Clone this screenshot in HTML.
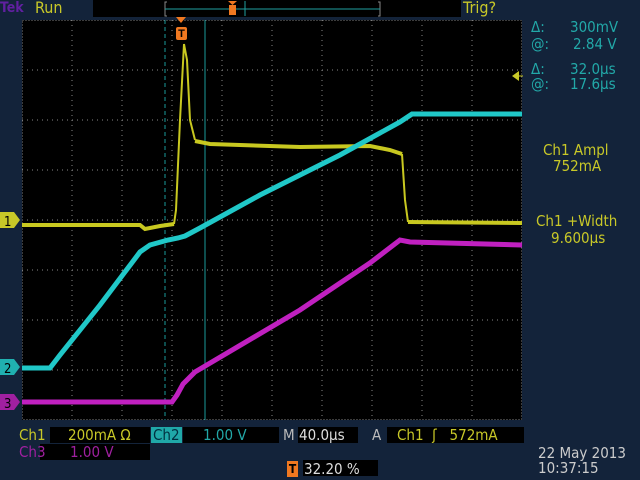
<!DOCTYPE html>
<html><head><style>
body{margin:0;width:640px;height:480px;background:#13233a;overflow:hidden;position:relative;font-family:"DejaVu Sans Condensed","Liberation Sans",sans-serif}
.t{position:absolute;font-size:14px;white-space:nowrap;line-height:16px}
.y{color:#c8c828}.c{color:#22a8a8}.m{color:#a020a0}
.box{position:absolute;background:#000;height:16px}
</style></head><body>
<svg width="640" height="480" style="position:absolute;left:0;top:0">
<rect x="22" y="20" width="500" height="400" fill="#000"/>
<g stroke="#888" stroke-width="1" stroke-dasharray="1,4">
<line x1="72" y1="20" x2="72" y2="420"/><line x1="122" y1="20" x2="122" y2="420"/><line x1="172" y1="20" x2="172" y2="420"/><line x1="222" y1="20" x2="222" y2="420"/><line x1="272" y1="20" x2="272" y2="420"/><line x1="322" y1="20" x2="322" y2="420"/><line x1="372" y1="20" x2="372" y2="420"/><line x1="422" y1="20" x2="422" y2="420"/><line x1="472" y1="20" x2="472" y2="420"/>
<line x1="22" y1="70" x2="522" y2="70"/><line x1="22" y1="120" x2="522" y2="120"/><line x1="22" y1="170" x2="522" y2="170"/><line x1="22" y1="220" x2="522" y2="220"/><line x1="22" y1="270" x2="522" y2="270"/><line x1="22" y1="320" x2="522" y2="320"/><line x1="22" y1="370" x2="522" y2="370"/>
</g>
<rect x="22.5" y="20.5" width="499" height="399" fill="none" stroke="#777" stroke-dasharray="1,2"/>
<line x1="165" y1="20" x2="165" y2="420" stroke="#1a9a9a" stroke-dasharray="4,3"/>
<line x1="205" y1="20" x2="205" y2="420" stroke="#1a9a9a"/>
<polyline fill="none" stroke="#c8c820" stroke-width="4" points="22,225 140,225 145,229 160,226 174,224"/>
<polyline fill="none" stroke="#c8c820" stroke-width="2" points="174,224 176,210 180,120 184,44 187,60 190,120 195,140"/>
<polyline fill="none" stroke="#c8c820" stroke-width="4" points="195,141 210,144 300,147 370,146 390,150 402,154"/>
<polyline fill="none" stroke="#c8c820" stroke-width="2" points="402,154 405,200 408,222"/>
<polyline fill="none" stroke="#c8c820" stroke-width="4" points="408,222 522,223"/>
<polyline fill="none" stroke="#20c8c8" stroke-width="5" points="22,368 50,368 60,355 100,305 140,252 150,245 168,240 178,238 185,236 200,228 260,195 340,155 400,122 412,114 522,114"/>
<polyline fill="none" stroke="#c020c0" stroke-width="5" points="22,402 172,402 177,395 183,384 195,372 300,310 370,263 400,240 410,242 522,245"/>
<path d="M176,17 h10 l-5,6z" fill="#f07820"/>
<rect x="176" y="27" width="11" height="13" rx="2" fill="#f07820"/>
<text x="181.5" y="37" font-size="11" font-weight="bold" text-anchor="middle" fill="#000" font-family="Liberation Sans">T</text>
<path d="M0,212 h14 l6,8 l-6,8 h-14z" fill="#c8c828"/><text x="4" y="226" font-size="13" fill="#000">1</text>
<path d="M0,359 h14 l6,8 l-6,8 h-14z" fill="#20b0b0"/><text x="4" y="373" font-size="13" fill="#000">2</text>
<path d="M0,394 h14 l6,8 l-6,8 h-14z" fill="#a020a0"/><text x="4" y="408" font-size="13" fill="#000">3</text>
<path d="M512,76 l7,-5 v10z" fill="#c8c828"/><line x1="519" y1="76" x2="523" y2="76" stroke="#c8c828"/>
<rect x="93" y="0" width="368" height="17" fill="#000"/>
<path d="M167,2 h-2 v14 h2 M378,2 h2 v14 h-2" stroke="#888" fill="none"/>
<line x1="165" y1="9" x2="380" y2="9" stroke="#20a0a0"/>
<line x1="245" y1="1" x2="245" y2="16" stroke="#20a0a0"/>
<rect x="229" y="5" width="7" height="10" fill="#f07820"/><path d="M228,1 h9 l-4.5,4z" fill="#f07820"/>
</svg>
<div class="t" style="left:0;top:0;color:#6020a0;font-weight:bold">Tek</div>
<div class="t y" style="left:35px;top:0;font-size:16px">Run</div>
<div class="t y" style="left:463px;top:0;font-size:16px">Trig?</div>
<div class="t c" style="left:531px;top:19px;font-size:15px">Δ:</div><div class="t c" style="left:570px;top:19px;font-size:15px">300mV</div>
<div class="t c" style="left:531px;top:36px;font-size:15px">@:</div><div class="t c" style="left:573px;top:36px;font-size:15px">2.84 V</div>
<div class="t c" style="left:531px;top:61px;font-size:15px">Δ:</div><div class="t c" style="left:570px;top:61px;font-size:15px">32.0μs</div>
<div class="t c" style="left:531px;top:76px;font-size:15px">@:</div><div class="t c" style="left:570px;top:76px;font-size:15px">17.6μs</div>
<div class="t y" style="left:543px;top:142px;font-size:15px">Ch1 Ampl</div>
<div class="t y" style="left:553px;top:158px;font-size:15px">752mA</div>
<div class="t y" style="left:536px;top:213px;font-size:15px">Ch1 +Width</div>
<div class="t y" style="left:551px;top:230px;font-size:15px">9.600μs</div>
<div class="box" style="left:50px;top:427px;width:100px"></div>
<div class="box" style="left:183px;top:427px;width:96px"></div>
<div class="box" style="left:298px;top:427px;width:60px"></div>
<div class="box" style="left:387px;top:427px;width:137px"></div>
<div class="box" style="left:40px;top:444px;width:110px"></div>
<div class="box" style="left:303px;top:460px;width:75px"></div>
<div class="t y" style="left:19px;top:427px;font-size:15px">Ch1</div>
<div class="t y" style="left:68px;top:427px;font-size:15px">200mA Ω</div>
<div class="t" style="left:151px;top:427px;background:#20a8a8;color:#003040;padding:0 2px;font-size:15px">Ch2</div>
<div class="t c" style="left:203px;top:427px;font-size:15px">1.00 V</div>
<div class="t" style="left:283px;top:427px;color:#bbb;font-size:15px">M</div>
<div class="t" style="left:299px;top:427px;color:#ddd;font-size:15px">40.0μs</div>
<div class="t" style="left:372px;top:427px;color:#bbb;font-size:15px">A</div>
<div class="t y" style="left:397px;top:427px;font-size:15px">Ch1 &nbsp;ʃ &nbsp; 572mA</div>
<div class="t m" style="left:19px;top:444px;font-size:15px">Ch3</div>
<div class="t m" style="left:70px;top:444px;font-size:15px">1.00 V</div>
<div class="t" style="left:287px;top:461px;background:#f07820;color:#000;font-size:12px;width:11px;text-align:center;font-weight:bold">T</div>
<div class="t" style="left:304px;top:461px;color:#ddd;font-size:15px">32.20 %</div>
<div class="t" style="left:538px;top:445px;color:#ccc;font-size:15px">22 May 2013</div>
<div class="t" style="left:538px;top:460px;color:#ccc;font-size:15px">10:37:15</div>
</body></html>
